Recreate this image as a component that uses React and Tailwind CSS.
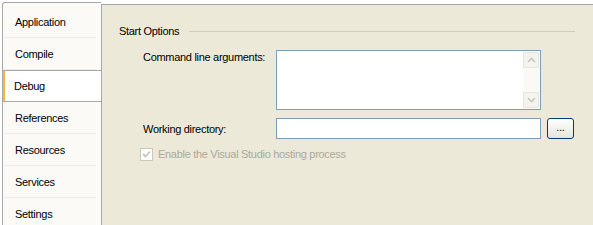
import React from 'react';

const tabs = ['Application', 'Compile', 'Debug', 'References', 'Resources', 'Services', 'Settings'];

function ScrollButton({ up }) {
  return (
    <div className="w-[16px] h-[16px] rounded-[2px] border border-[#e6e4dc] bg-[#f4f3ee] flex items-center justify-center">
      <svg width="9" height="6" viewBox="0 0 9 6">
        <path
          d={up ? 'M1 5 L4.5 1.5 L8 5' : 'M1 1 L4.5 4.5 L8 1'}
          fill="none"
          stroke="#c9c7ba"
          strokeWidth="1.6"
        />
      </svg>
    </div>
  );
}

export default function App() {
  return (
    <div className="w-[593px] h-[225px] overflow-hidden bg-white flex pt-[2px] pl-[2px] font-['Liberation_Sans',Arial,sans-serif] text-[11px] leading-[14px] tracking-[-0.3px] text-black">
      {/* Sidebar */}
      <div className="w-[99px] shrink-0 bg-[#fbfaf7] border-l border-t border-[#a5a9ab] rounded-tl-[3px] pt-[3px] flex flex-col overflow-hidden">
        {tabs.map((t) => {
          const active = t === 'Debug';
          return active ? (
            <div
              key={t}
              className="relative h-[32px] shrink-0 bg-white border-y border-[#a7a7a7] flex items-center pl-[12px] -ml-px mr-[-1px]"
            >
              <div className="absolute left-0 top-0 bottom-0 w-[3px] bg-[#f7b63c]" />
              {t}
            </div>
          ) : (
            <div key={t} className="h-[32px] shrink-0 flex items-center pl-[12px] border-b border-[#ecebe6] mr-[5px] ml-[2px]">
              <span className="-ml-[2px]">{t}</span>
            </div>
          );
        })}
      </div>

      {/* Panel */}
      <div className="flex-1 mt-[2px] bg-[#ece9d8] border-l border-t border-[#a5a9ab] pl-[17px] pt-[19px] pr-[18px]">
        <div className="flex items-center">
          <span>Start Options</span>
          <div className="flex-1 h-px bg-[#d0cdbb] ml-[10px] mt-px" />
        </div>

        <div className="pl-[24px] mt-[12px] flex flex-col">
          <div className="flex">
            <div className="w-[133px] shrink-0">Command line arguments:</div>
            <div className="w-[265px] h-[60px] bg-white border border-[#7f9db9] flex justify-end">
              <div className="w-[17px] bg-[#faf9f6] flex flex-col justify-between py-px pr-px">
                <ScrollButton up />
                <ScrollButton />
              </div>
            </div>
          </div>

          <div className="flex items-center mt-[8px]">
            <div className="w-[133px] shrink-0">Working directory:</div>
            <div className="w-[265px] h-[21px] bg-white border border-[#7f9db9]" />
            <button className="ml-[6px] w-[27px] h-[21px] rounded-[3px] border border-[#003c74] bg-gradient-to-b from-white to-[#e6e5dd] text-[11px] leading-none pb-[2px]">
              ...
            </button>
          </div>

          <div className="flex items-center mt-[8px] -ml-[3px] text-[#aca899]">
            <div className="w-[13px] h-[13px] border border-[#cac8bb] bg-white flex items-center justify-center">
              <svg width="9" height="9" viewBox="0 0 9 9">
                <path d="M1 4 L3.5 6.5 L8 1.5" fill="none" stroke="#c8c6b8" strokeWidth="1.8" />
              </svg>
            </div>
            <span className="ml-[5px]">Enable the Visual Studio hosting process</span>
          </div>
        </div>
      </div>
    </div>
  );
}
